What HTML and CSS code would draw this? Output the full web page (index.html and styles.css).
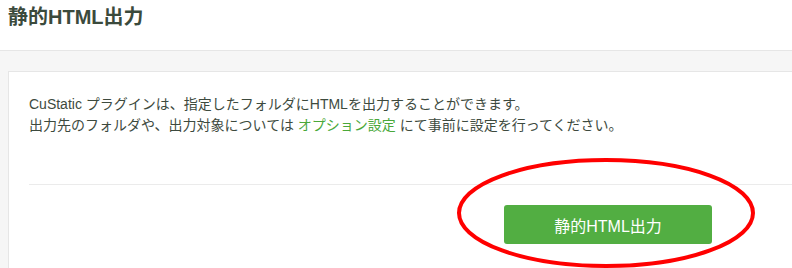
FILE: index.html
```html
<!DOCTYPE html>
<html lang="ja">
<head>
<meta charset="utf-8">
<link rel="stylesheet" href="styles.css">
</head>
<body>
<header class="page-header">
  <h1 class="page-title">静的HTML出力</h1>
</header>
<main class="page-body">
  <section class="card">
    <p class="desc">CuStatic プラグインは、指定したフォルダにHTMLを出力することができます。<br>出力先のフォルダや、出力対象については <a class="link" href="#">オプション設定</a> にて事前に設定を行ってください。</p>
    <hr class="divider">
    <div class="actions">
      <button class="btn-primary" type="button">静的HTML出力</button>
    </div>
  </section>
</main>
<svg class="annotation" width="792" height="268" viewBox="0 0 792 268" aria-hidden="true">
  <ellipse cx="606" cy="213" rx="147" ry="53" fill="none" stroke="#ff0000" stroke-width="4"/>
</svg>
</body>
</html>
```
FILE: styles.css
```css
html, body {
  margin: 0;
  padding: 0;
  height: 268px;
  overflow: hidden;
}
body {
  font-family: "Liberation Sans", "Noto Sans CJK JP", sans-serif;
  background: #f6f6f6;
  color: #3d4a3e;
  position: relative;
}
.page-header {
  background: #ffffff;
  border-bottom: 1px solid #e6e6e6;
  padding-left: 8px;
  box-sizing: border-box;
  height: 51px;
}
.page-title {
  margin: 0;
  padding-top: 3px;
  font-size: 20px;
  line-height: 28px;
  font-weight: bold;
  color: #3b4a3c;
}
.page-body {
  padding: 20px 0 0 8px;
}
.card {
  background: #ffffff;
  border: 1px solid #e6e6e6;
  border-right: none;
  border-bottom: none;
  padding: 22px 0 24px 20px;
}
.desc {
  margin: 0;
  font-size: 14px;
  line-height: 21px;
  color: #3d4a3e;
}
.link {
  color: #4aa83a;
  text-decoration: none;
}
.divider {
  margin: 48px 0 0 0;
  border: none;
  border-top: 1px solid #ebebeb;
  height: 0;
}
.actions {
  display: flex;
  justify-content: flex-end;
  padding: 20px 80px 0 0;
}
.btn-primary {
  width: 208px;
  height: 39px;
  background: #52ae42;
  color: #ffffff;
  border: none;
  border-radius: 3px;
  font-family: "Liberation Sans", "Noto Sans CJK JP", sans-serif;
  font-size: 16px;
  padding: 0;
}
.annotation {
  position: absolute;
  left: 0;
  top: 0;
  pointer-events: none;
}
```
